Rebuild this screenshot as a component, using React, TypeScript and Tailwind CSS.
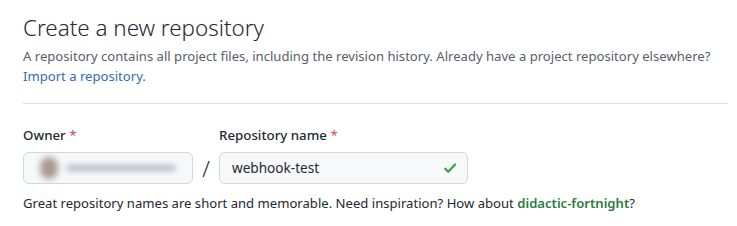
import React from 'react';

const font = { fontFamily: '"Noto Sans", "Open Sans", sans-serif' };

export default function App() {
  return (
    <div className="w-[737px] h-[226px] bg-white pl-[23px] pr-[9px] pt-[12px] text-[#24292f]" style={font}>
      <div className="pb-[17px] border-b border-[#d8dee4]">
        <h1 className="text-[22.4px] leading-[32px] font-light text-[#24292f]">Create a new repository</h1>
        <p className="text-[13.1px] leading-[20px] text-[#57606a] mt-[2px]">
          A repository contains all project files, including the revision history. Already have a project repository elsewhere?
        </p>
        <a className="text-[13.1px] leading-[20px] text-[#2f6db5] block">Import a repository.</a>
      </div>

      <div className="flex items-end mt-[21px]">
        <div className="flex flex-col">
          <label className="text-[13.3px] leading-[20px] font-medium mb-[7px]">
            Owner <span className="text-[#d0454f] font-normal">*</span>
          </label>
          <div className="w-[170px] h-[32px] rounded-md border border-[#d0d7de] bg-[#f6f8fa] flex items-center pl-[16px] gap-[8px] overflow-hidden">
            <div className="w-[18px] h-[22px] rounded-full bg-[#a99b92] blur-[3px]" />
            <div className="w-[110px] h-[8px] rounded bg-[#c5c9d3] blur-[2.5px]" />
          </div>
        </div>
        <div className="w-[26px] h-[32px] flex items-center justify-center text-[22px] font-light text-[#24292f]">/</div>
        <div className="flex flex-col">
          <label className="text-[13.3px] leading-[20px] font-medium mb-[7px]">
            Repository name <span className="text-[#d0454f] font-normal">*</span>
          </label>
          <div className="w-[249px] h-[32px] rounded-md border border-[#d0d7de] bg-[#f6f8fa] flex items-center justify-between pl-[12px] pr-[10px] text-[13.6px]">
            <span>webhook-test</span>
            <svg width="14" height="14" viewBox="0 0 16 16" fill="none" stroke="#3fa14f" strokeWidth="2.6" strokeLinecap="round" strokeLinejoin="round">
              <path d="M2.5 8.8 6 12.2 13.8 4" />
            </svg>
          </div>
        </div>
      </div>

      <p className="text-[13.1px] leading-[20px] mt-[9px]">
        Great repository names are short and memorable. Need inspiration? How about{' '}
        <span className="font-semibold text-[#2a7d3c]">didactic-fortnight</span>?
      </p>
    </div>
  );
}
